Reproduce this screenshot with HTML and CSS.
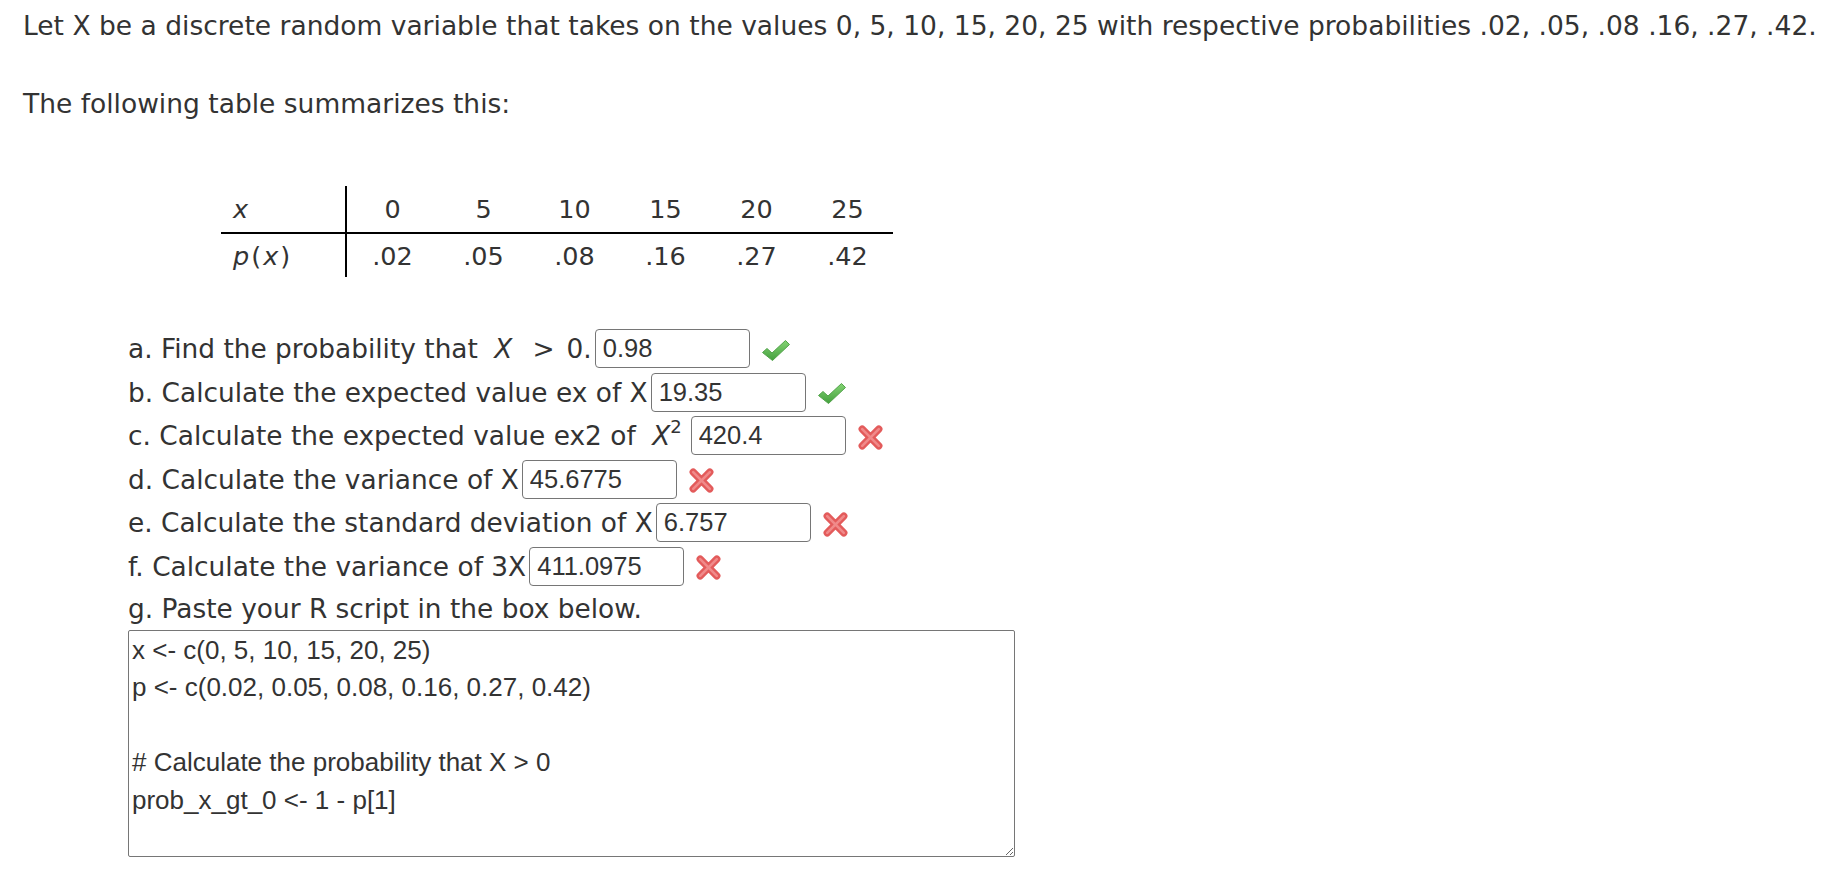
FILE: index.html
```html
<!DOCTYPE html>
<html>
<head>
<meta charset="utf-8">
<link rel="stylesheet" href="styles.css">
</head>
<body>
<div class="page">
  <p class="intro">Let X be a discrete random variable that takes on the values 0, 5, 10, 15, 20, 25 with respective probabilities .02, .05, .08 .16, .27, .42.</p>
  <p class="intro second">The following table summarizes this:</p>

  <table class="dist">
    <tr class="top">
      <td class="lbl"><i>x</i></td>
      <td>0</td><td>5</td><td>10</td><td>15</td><td>20</td><td>25</td>
    </tr>
    <tr class="bot">
      <td class="lbl"><i>p</i><span class="pr">(</span><i>x</i><span class="pr">)</span></td>
      <td>.02</td><td>.05</td><td>.08</td><td>.16</td><td>.27</td><td>.42</td>
    </tr>
  </table>

  <div class="questions">
    <div class="q">
      <span>a. Find the probability that <span class="m"><i>X</i></span><span class="m">&gt;</span>0.</span>
      <input class="ans" type="text" value="0.98">
      <svg class="icon ok" viewBox="0 0 30 23"><defs><linearGradient id="g1" x1="0" y1="0" x2="0" y2="1"><stop offset="0" stop-color="#84d474"/><stop offset="1" stop-color="#44a03e"/></linearGradient></defs><path d="M1.5 13.5 L6 9.5 L11 14 L24.5 1.5 L28.5 5.5 L11.5 21.5 Z" fill="url(#g1)" stroke="#52a34a" stroke-width="1" stroke-linejoin="round"/></svg>
    </div>
    <div class="q">
      <span>b. Calculate the expected value ex of X</span>
      <input class="ans" type="text" value="19.35">
      <svg class="icon ok" viewBox="0 0 30 23"><defs><linearGradient id="g2" x1="0" y1="0" x2="0" y2="1"><stop offset="0" stop-color="#84d474"/><stop offset="1" stop-color="#44a03e"/></linearGradient></defs><path d="M1.5 13.5 L6 9.5 L11 14 L24.5 1.5 L28.5 5.5 L11.5 21.5 Z" fill="url(#g2)" stroke="#52a34a" stroke-width="1" stroke-linejoin="round"/></svg>
    </div>
    <div class="q">
      <span>c. Calculate the expected value ex2 of <span class="m sq"><i>X</i><sup>2</sup></span></span>
      <input class="ans" type="text" value="420.4">
      <svg class="icon bad" viewBox="0 0 26 26"><g stroke-linecap="round"><path d="M5 5 L21 21 M21 5 L5 21" stroke="#e35b5b" stroke-width="7"/><path d="M5 5 L21 21 M21 5 L5 21" stroke="#f08a8a" stroke-width="2.5"/></g></svg>
    </div>
    <div class="q">
      <span>d. Calculate the variance of X</span>
      <input class="ans" type="text" value="45.6775">
      <svg class="icon bad" viewBox="0 0 26 26"><g stroke-linecap="round"><path d="M5 5 L21 21 M21 5 L5 21" stroke="#e35b5b" stroke-width="7"/><path d="M5 5 L21 21 M21 5 L5 21" stroke="#f08a8a" stroke-width="2.5"/></g></svg>
    </div>
    <div class="q">
      <span>e. Calculate the standard deviation of X</span>
      <input class="ans" type="text" value="6.757">
      <svg class="icon bad" viewBox="0 0 26 26"><g stroke-linecap="round"><path d="M5 5 L21 21 M21 5 L5 21" stroke="#e35b5b" stroke-width="7"/><path d="M5 5 L21 21 M21 5 L5 21" stroke="#f08a8a" stroke-width="2.5"/></g></svg>
    </div>
    <div class="q">
      <span>f. Calculate the variance of 3X</span>
      <input class="ans" type="text" value="411.0975">
      <svg class="icon bad" viewBox="0 0 26 26"><g stroke-linecap="round"><path d="M5 5 L21 21 M21 5 L5 21" stroke="#e35b5b" stroke-width="7"/><path d="M5 5 L21 21 M21 5 L5 21" stroke="#f08a8a" stroke-width="2.5"/></g></svg>
    </div>
    <div class="q last">
      <span>g. Paste your R script in the box below.</span>
    </div>
    <textarea class="script">x &lt;- c(0, 5, 10, 15, 20, 25)
p &lt;- c(0.02, 0.05, 0.08, 0.16, 0.27, 0.42)

# Calculate the probability that X &gt; 0
prob_x_gt_0 &lt;- 1 - p[1]</textarea>
  </div>
</div>
</body>
</html>
```

FILE: styles.css
```css
html, body {
  margin: 0;
  padding: 0;
  background: #ffffff;
}

.page {
  padding: 11px 0 0 23px;
  font-family: "DejaVu Sans", Verdana, sans-serif;
  font-size: 26.5px;
  color: #333333;
}

.intro {
  margin: 0;
  line-height: 30px;
}

.intro.second {
  margin-top: 48px;
}

.dist {
  border-collapse: collapse;
  margin: 67px 0 0 198px;
  font-size: 25.5px;
  color: #333333;
}

.dist td {
  width: 91px;
  padding: 0;
  text-align: center;
  line-height: 30px;
}

.dist td.lbl {
  width: 112px;
  padding-left: 12px;
  text-align: left;
  border-right: 2px solid #000;
}

.dist .pr {
  margin: 0 2px;
}

.dist tr.top td {
  height: 46px;
  border-bottom: 2px solid #000;
}

.dist tr.bot td {
  height: 43px;
}

.questions {
  margin: 51px 0 0 105px;
  display: flex;
  flex-direction: column;
  gap: 2.5px;
  font-size: 26.4px;
}

.q {
  display: flex;
  align-items: center;
  height: 41px;
  white-space: nowrap;
}

.q.last {
  height: 38px;
}

.m {
  margin: 0 12px 0 8px;
}

.m.sq {
  margin-right: 6px;
}

.m sup {
  font-size: 18px;
  vertical-align: 12px;
  line-height: 0;
  font-style: normal;
}

.ans {
  box-sizing: border-box;
  width: 155px;
  height: 39px;
  margin: 0 0 0 3px;
  padding: 0 7px;
  border: 1.5px solid #767676;
  border-radius: 4px;
  font-family: "Liberation Sans", Arial, sans-serif;
  font-size: 25.5px;
  color: #333333;
  background: #fff;
}

.icon {
  margin-left: 11px;
  margin-top: 3px;
}

.icon.ok {
  width: 30px;
  height: 23px;
}

.icon.bad {
  width: 27px;
  height: 27px;
}

.script {
  box-sizing: border-box;
  width: 887px;
  height: 227px;
  margin-top: 0;
  padding: 1px 3px;
  border: 1.5px solid #767676;
  border-radius: 2px;
  font-family: "Liberation Sans", Arial, sans-serif;
  font-size: 26px;
  line-height: 37.5px;
  color: #333333;
  resize: both;
}
```
